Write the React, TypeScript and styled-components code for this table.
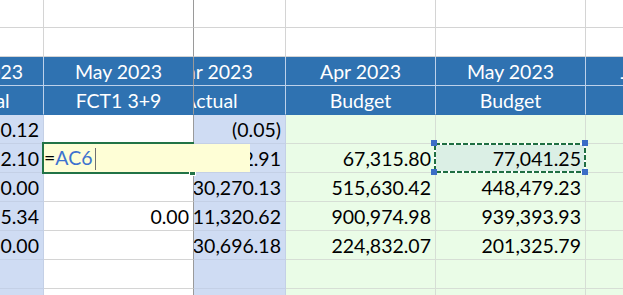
import React from 'react';
import styled, { createGlobalStyle } from 'styled-components';

const GlobalStyle = createGlobalStyle`
  html, body {
    margin: 0;
    padding: 0;
    background: #ffffff;
    overflow: hidden;
  }
  body {
    font-family: Lato, 'Open Sans', sans-serif;
  }
`;

type Tone = 'plain' | 'head' | 'blue' | 'green' | 'mark';

const ROW_H = 29;

const fills: Record<Tone, string> = {
  plain: '#ffffff',
  head: '#2f72b1',
  blue: '#cfdcf3',
  green: '#eafce7',
  mark: '#dbefe5',
};

const lines: Record<Tone, string> = {
  plain: '#d4d4d4',
  head: '#bdd1ea',
  blue: '#c4d0e6',
  green: '#d6ded5',
  mark: '#d6ded5',
};

const Sheet = styled.div`
  position: relative;
  display: flex;
  width: 623px;
  height: 296px;
  margin-top: -1px;
  overflow: hidden;
`;

const Pane = styled.div<{ $width?: number }>`
  flex: ${({ $width }) => ($width ? 'none' : '1')};
  width: ${({ $width }) => ($width ? `${$width}px` : 'auto')};
  overflow: hidden;
`;

const PaneGrid = styled.div<{ $cols: number[]; $shift: number }>`
  display: grid;
  grid-template-columns: ${({ $cols }) => $cols.map((c) => `${c}px`).join(' ')};
  grid-auto-rows: ${ROW_H}px;
  margin-left: ${({ $shift }) => -$shift}px;
`;

const Cell = styled.div<{
  $tone: Tone;
  $center?: boolean;
  $freeze?: boolean;
  $base?: boolean;
}>`
  position: relative;
  box-sizing: border-box;
  display: flex;
  align-items: flex-end;
  justify-content: ${({ $center }) => ($center ? 'center' : 'flex-end')};
  padding: 0 4px 4px;
  background: ${({ $tone }) => fills[$tone]};
  border-right: 1px solid
    ${({ $freeze, $tone }) => ($freeze ? '#9a9a9a' : lines[$tone])};
  border-bottom: 1px solid
    ${({ $base, $tone }) => ($base ? fills.head : lines[$tone])};
  color: ${({ $tone }) => ($tone === 'head' ? '#ffffff' : '#000000')};
  font-size: 19.5px;
  line-height: 1;
  white-space: nowrap;
`;

const Marquee = styled.div`
  position: absolute;
  left: -2px;
  top: -1px;
  right: 0;
  bottom: 0;
  z-index: 2;
  pointer-events: none;

  svg {
    position: absolute;
    inset: 0;
  }
`;

const Handle = styled.span<{ $x: 'left' | 'right'; $y: 'top' | 'bottom' }>`
  position: absolute;
  width: 6px;
  height: 6px;
  background: #3c6dc6;
  ${({ $x }) => $x}: -3px;
  ${({ $y }) => $y}: -3px;
`;

const ActiveFrame = styled.div`
  position: absolute;
  left: 42px;
  top: 143px;
  width: 152px;
  height: 32px;
  box-sizing: border-box;
  border: 2px solid #217346;
  z-index: 3;
`;

const FillHandle = styled.span`
  position: absolute;
  right: -4px;
  bottom: -4px;
  width: 5px;
  height: 5px;
  background: #217346;
  border: 1px solid #ffffff;
`;

const Editor = styled.div`
  position: absolute;
  left: 44px;
  top: 145px;
  width: 206px;
  height: 28px;
  box-sizing: border-box;
  display: flex;
  align-items: flex-end;
  padding: 0 0 5px 0;
  background: #fefed6;
  font-size: 19.5px;
  line-height: 1;
  color: #000000;
  z-index: 4;
`;

const Ref = styled.span`
  color: #3d72cf;
`;

const Caret = styled.span`
  width: 1px;
  height: 22px;
  margin: 0 0 -3px 2px;
  background: #6f6f6f;
`;

type Col = {
  width: number;
  head: [string, string];
  tone: Tone;
  body: string[];
  freeze?: boolean;
  mark?: number;
};

const frozenCols: Col[] = [
  {
    width: 122,
    head: ['Apr 2023', 'Actual'],
    tone: 'blue',
    body: ['0.12', '2.10', '0.00', '5.34', '0.00', '', ''],
  },
  {
    width: 150,
    head: ['May 2023', 'FCT1 3+9'],
    tone: 'plain',
    body: ['', '', '', '0.00', '', '', ''],
    freeze: true,
  },
];

const scrollCols: Col[] = [
  {
    width: 150,
    head: ['Mar 2023', 'Actual'],
    tone: 'blue',
    body: ['(0.05)', '49,722.91', '30,270.13', '11,320.62', '30,696.18', '', ''],
  },
  {
    width: 150,
    head: ['Apr 2023', 'Budget'],
    tone: 'green',
    body: ['', '67,315.80', '515,630.42', '900,974.98', '224,832.07', '', ''],
  },
  {
    width: 150,
    head: ['May 2023', 'Budget'],
    tone: 'green',
    body: ['', '77,041.25', '448,479.23', '939,393.93', '201,325.79', '', ''],
    mark: 1,
  },
  {
    width: 150,
    head: ['Jun 2023', 'Budget'],
    tone: 'green',
    body: ['', '', '', '', '', '', ''],
  },
];

const MarqueeBox: React.FC = () => (
  <Marquee>
    <svg width="152" height="30" viewBox="0 0 152 30">
      <rect x="1" y="1" width="150" height="28" fill="none" stroke="#ffffff" strokeWidth="2" />
      <rect
        x="1"
        y="1"
        width="150"
        height="28"
        fill="none"
        stroke="#1f6e42"
        strokeWidth="2"
        strokeDasharray="5 2"
      />
    </svg>
    <Handle $x="left" $y="top" />
    <Handle $x="right" $y="top" />
    <Handle $x="left" $y="bottom" />
    <Handle $x="right" $y="bottom" />
  </Marquee>
);

const PaneRows: React.FC<{ cols: Col[] }> = ({ cols }) => {
  const rows = 2 + 2 + cols[0].body.length;
  const cells: React.ReactNode[] = [];
  for (let r = 0; r < rows; r++) {
    cols.forEach((col, c) => {
      const key = `${r}-${c}`;
      if (r < 2) {
        cells.push(<Cell key={key} $tone="plain" $freeze={col.freeze} />);
      } else if (r < 4) {
        cells.push(
          <Cell key={key} $tone="head" $center $freeze={col.freeze} $base={r === 3}>
            {col.head[r - 2]}
          </Cell>
        );
      } else {
        const i = r - 4;
        const marked = col.mark === i;
        cells.push(
          <Cell key={key} $tone={marked ? 'mark' : col.tone} $freeze={col.freeze}>
            {col.body[i]}
            {marked && <MarqueeBox />}
          </Cell>
        );
      }
    });
  }
  return <>{cells}</>;
};

export default function App() {
  return (
    <>
      <GlobalStyle />
      <Sheet>
        <Pane $width={194}>
          <PaneGrid $cols={frozenCols.map((c) => c.width)} $shift={78}>
            <PaneRows cols={frozenCols} />
          </PaneGrid>
        </Pane>
        <Pane>
          <PaneGrid $cols={scrollCols.map((c) => c.width)} $shift={58}>
            <PaneRows cols={scrollCols} />
          </PaneGrid>
        </Pane>
        <ActiveFrame>
          <FillHandle />
        </ActiveFrame>
        <Editor>
          =<Ref>AC6</Ref>
          <Caret />
        </Editor>
      </Sheet>
    </>
  );
}
